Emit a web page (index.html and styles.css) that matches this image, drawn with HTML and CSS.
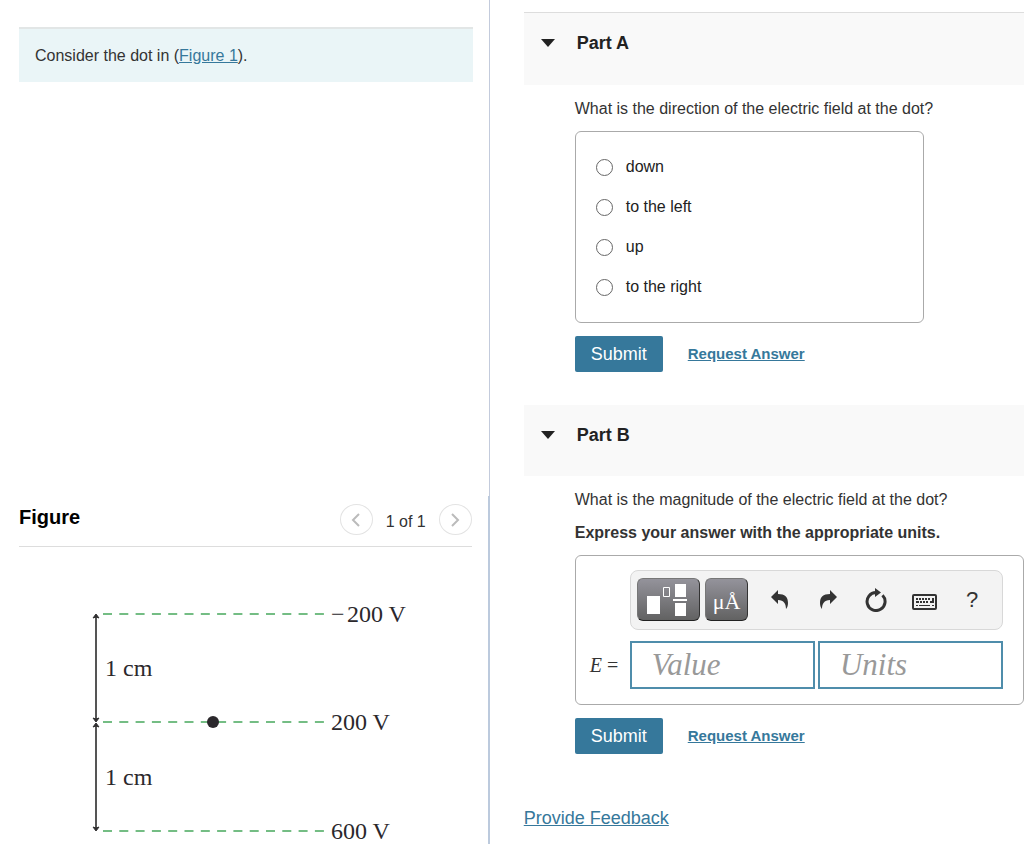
FILE: index.html
```html
<!DOCTYPE html>
<html lang="en">
<head>
    <meta charset="UTF-8">
    <meta name="viewport" content="width=device-width, initial-scale=1.0">
    <title>Electric Field at the Dot</title>
    <link rel="stylesheet" href="styles.css">
</head>
<body>

    <div class="layout">
        <aside class="side">
            <section class="intro">
                <p class="intro-text">Consider the dot in (<a href="#figure">Figure 1</a>).</p>
            </section>

            <section class="figure" id="figure">
                <header class="figure-header">
                    <h2>Figure</h2>
                    <div class="pager">
                        <button class="pager-button" type="button" aria-label="Previous figure">
                            <svg width="16" height="16" viewBox="0 0 16 16"><path d="M11 2 5 8l6 6"/></svg>
                        </button>
                        <span class="pager-count">1 of 1</span>
                        <button class="pager-button" type="button" aria-label="Next figure">
                            <svg width="16" height="16" viewBox="0 0 16 16"><path d="m5 2 6 6-6 6"/></svg>
                        </button>
                    </div>
                </header>

                <svg class="diagram" width="400" height="297" viewBox="0 0 400 297">
                    <!-- equipotential lines -->
                    <g class="potential">
                        <path d="M84 67h222"/>
                        <path d="M84 175h222"/>
                        <path d="M84 284h222"/>
                    </g>
                    <!-- distances -->
                    <g class="distance">
                        <path d="M77 69v103M77 178v104"/>
                        <path class="arrow" d="m77 67 3 4-3-1-3 1zM77 175l3-4-3 1-3-1zM77 176l3 4-3-1-3 1zM77 284l3-4-3 1-3-1z"/>
                    </g>
                    <circle cx="194" cy="175" r="6"/>
                    <text x="86" y="129">1 cm</text>
                    <text x="86" y="238">1 cm</text>
                    <text x="312" y="75">−<tspan x="328">200 V</tspan></text>
                    <text x="312" y="183">200 V</text>
                    <text x="312" y="292">600 V</text>
                </svg>
            </section>
        </aside>

        <main class="main">
            <section class="part">
                <header class="part-header part-header-first">
                    <button class="part-toggle" type="button"><span class="caret"></span>Part A</button>
                </header>
                <form class="part-body">
                    <p class="question" id="question-a">What is the direction of the electric field at the dot?</p>
                    <fieldset class="choices" aria-labelledby="question-a">
                        <label class="choice"><input type="radio" name="direction" value="down">down</label>
                        <label class="choice"><input type="radio" name="direction" value="left">to the left</label>
                        <label class="choice"><input type="radio" name="direction" value="up">up</label>
                        <label class="choice"><input type="radio" name="direction" value="right">to the right</label>
                    </fieldset>
                    <div class="actions">
                        <button class="submit" type="button">Submit</button>
                        <a class="request" href="#">Request Answer</a>
                    </div>
                </form>
            </section>

            <section class="part">
                <header class="part-header">
                    <button class="part-toggle" type="button"><span class="caret"></span>Part B</button>
                </header>
                <form class="part-body">
                    <p class="question">What is the magnitude of the electric field at the dot?</p>
                    <p class="question question-note">Express your answer with the appropriate units.</p>
                    <div class="answer">
                        <div class="toolbar">
                            <button class="tool tool-wide" type="button" aria-label="Templates">
                                <svg width="44" height="36" viewBox="0 0 44 36">
                                    <path fill="#fff" d="M0 14h13v18H0zM28 2h11v13H28zM28 21h11v13H28zM26 17h14v2H26z"/>
                                    <path fill="none" stroke="#fff" d="M16.500 5.500h6v9h-6z"/>
                                </svg>
                            </button>
                            <button class="tool tool-symbols" type="button" aria-label="Symbols">μÅ</button>
                            <div class="tool-icons">
                                <button class="tool-icon" type="button" aria-label="Undo">
                                    <svg width="20" height="22" viewBox="0 0 20 22"><path d="M1 8 8 1v4c7 0 10 3 10 9 0 3-1 5-2 6 0-5-2-9-8-9v4z"/></svg>
                                </button>
                                <button class="tool-icon" type="button" aria-label="Redo">
                                    <svg width="20" height="22" viewBox="0 0 20 22"><path d="m19 8-7-7v4C5 5 2 8 2 14c0 3 1 5 2 6 0-5 2-9 8-9v4z"/></svg>
                                </button>
                                <button class="tool-icon" type="button" aria-label="Reset">
                                    <svg width="22" height="24" viewBox="0 0 22 24">
                                        <path class="stroke" d="M11 4.500a9 9 0 1 0 6.500 2.700"/>
                                        <path d="M10 0v9l6-4.500z"/>
                                    </svg>
                                </button>
                                <button class="tool-icon" type="button" aria-label="Keyboard shortcuts">
                                    <svg width="26" height="22" viewBox="0 0 26 22">
                                        <rect x="2" y="6" width="23" height="14" rx="1" fill="none" stroke="#333" stroke-width="2"/>
                                        <path d="M5 9h2v2H5zM8 9h2v2H8zM11 9h2v2h-2zM14 9h2v2h-2zM17 9h2v2h-2zM21 9h2v5h-4v-2h2zM5 12h3v2H5zM9 12h2v2H9zM12 12h2v2h-2zM15 12h2v2h-2zM5 16h2v1H5zM8 16h11v1H8zM21 16h2v1h-2z"/>
                                    </svg>
                                </button>
                                <button class="tool-icon tool-help" type="button" aria-label="Help">?</button>
                            </div>
                        </div>
                        <label class="answer-label" for="value"><i>E</i> =</label>
                        <div class="answer-fields">
                            <input class="field" id="value" type="text" placeholder="Value">
                            <input class="field" type="text" placeholder="Units" aria-label="Units">
                        </div>
                    </div>
                    <div class="actions">
                        <button class="submit" type="button">Submit</button>
                        <a class="request" href="#">Request Answer</a>
                    </div>
                </form>
            </section>

            <a class="feedback" href="#">Provide Feedback</a>
        </main>
    </div>

</body>
</html>
```
FILE: styles.css
```css
* {
    box-sizing: border-box;
}
body {
    font-family: "Liberation Sans", Arial, sans-serif;
    font-size: 16px;
    line-height: 24px;
    color: #333;
    background-color: #fff;
    margin: 0;
}
h2, p {
    margin: 0;
}
a {
    color: #36789b;
}
button {
    font-family: inherit;
    cursor: pointer;
}
.layout {
    display: grid;
    grid-template-columns: minmax(0, 11fr) minmax(0, 12fr);
    min-height: 100vh;
}

/* left column */
.side {
    display: flex;
    flex-direction: column;
}
.intro {
    flex: 1;
    padding: 27px 16px 0 19px;
    border-right: 1px solid #c3cbdc;
}
.intro-text {
    background-color: #eaf5f7;
    border-top: 2px solid #e2e6e6;
    padding: 15px 16px 14px;
}
.figure {
    padding: 0 16px 0 19px;
    border-right: 2px solid #bccadd;
}
.figure-header {
    display: flex;
    justify-content: space-between;
    align-items: center;
    height: 51px;
    border-bottom: 1px solid #ddd;
}
.figure-header h2 {
    font-size: 20px;
    color: #000;
    padding-bottom: 8px;
}
.pager {
    display: flex;
    align-items: center;
    gap: 13px;
    padding-bottom: 3px;
}
.pager-count {
    padding-top: 4px;
    white-space: nowrap;
}
.pager-button {
    display: flex;
    align-items: center;
    justify-content: center;
    width: 33px;
    height: 31px;
    padding: 0;
    background-color: #fff;
    border: 1px solid #e3e3e3;
    border-radius: 50%;
}
.pager-button path {
    fill: none;
    stroke: #bbb;
    stroke-width: 2;
}
.diagram {
    display: block;
    max-width: 100%;
    font-family: "Liberation Serif", "Times New Roman", serif;
    font-size: 24px;
    fill: #2b282c;
}
.potential {
    stroke: #74bd84;
    stroke-width: 2;
    stroke-dasharray: 9 7.300;
}
.distance {
    stroke: #555;
    stroke-width: 2;
}
.arrow {
    stroke: #333;
    stroke-width: 1;
}

/* right column */
.main {
    padding: 12px 0 12px 34px;
}
.part {
    margin-bottom: 33px;
}
.part-header {
    background-color: #f9f9f9;
    height: 71px;
    padding: 17px;
}
.part-header-first {
    height: 73px;
    border-top: 1px solid #ddd;
}
.part-toggle {
    display: flex;
    align-items: center;
    gap: 22px;
    padding: 0;
    background: none;
    border: none;
    color: #222;
    font-size: 18px;
    font-weight: bold;
    line-height: 26px;
}
.caret {
    border: 7px solid transparent;
    border-top: 8px solid #222;
    border-bottom: none;
}
.part-body {
    padding: 12px 0 0 51px;
}
.question-note {
    font-weight: bold;
    padding-top: 9px;
}
.choices {
    width: 349px;
    max-width: 100%;
    margin: 10px 0 0;
    padding: 15px 20px;
    border: 1px solid #aaa;
    border-radius: 6px;
}
.choice {
    display: flex;
    align-items: center;
    gap: 13px;
    height: 40px;
    color: #222;
}
.choice input {
    appearance: none;
    width: 17px;
    height: 17px;
    margin: 0;
    background-color: #fff;
    border: 1px solid #666;
    border-radius: 50%;
}
.choice input:checked {
    border: 5px solid #36789b;
}
.actions {
    display: flex;
    align-items: center;
    gap: 25px;
    margin-top: 13px;
}
.submit {
    width: 88px;
    height: 36px;
    padding: 0;
    background-color: #36789b;
    border: none;
    border-radius: 2px;
    color: #fff;
    font-size: 18px;
}
.request {
    font-size: 15px;
    font-weight: bold;
}
.answer {
    display: grid;
    grid-template-columns: 40px minmax(0, 1fr);
    row-gap: 11px;
    margin-top: 10px;
    padding: 14px 20px 15px 14px;
    border: 1px solid #aaa;
    border-radius: 6px;
}
.toolbar {
    grid-column: 2;
    display: flex;
    gap: 5px;
    height: 60px;
    padding: 7px 6px;
    background-color: #f3f3f3;
    border: 1px solid #d8d8d8;
    border-radius: 8px;
}
.tool {
    display: flex;
    align-items: center;
    justify-content: center;
    width: 43px;
    height: 43px;
    padding: 0;
    background: linear-gradient(#94939b, #626262);
    border: 1px solid;
    border-color: #777 #333 #222 #777;
    border-radius: 6px;
    color: #fff;
    font-family: "Liberation Serif", "Times New Roman", serif;
    font-size: 22px;
}
.tool-wide {
    width: 64px;
}
.tool-symbols {
    padding-top: 4px;
}
.tool-icons {
    display: flex;
    padding-left: 3px;
}
.tool-icon {
    display: flex;
    align-items: center;
    justify-content: center;
    width: 48px;
    padding: 0;
    background: none;
    border: none;
    color: #333;
    fill: #333;
}
.tool-icon .stroke {
    fill: none;
    stroke: #333;
    stroke-width: 3;
}
.tool-help {
    font-size: 22px;
}
.answer-label {
    align-self: center;
    font-family: "Liberation Serif", "Times New Roman", serif;
    font-size: 20px;
}
.answer-fields {
    display: flex;
    gap: 3px;
}
.field {
    flex: 1;
    min-width: 0;
    height: 48px;
    padding: 0 20px;
    background-color: #fff;
    border: 2px solid #4f8dab;
    font-family: "Liberation Serif", "Times New Roman", serif;
    font-size: 31px;
    font-style: italic;
}
.field::placeholder {
    color: #999;
}
.feedback {
    display: inline-block;
    margin-top: 19px;
    font-size: 18px;
}
```
